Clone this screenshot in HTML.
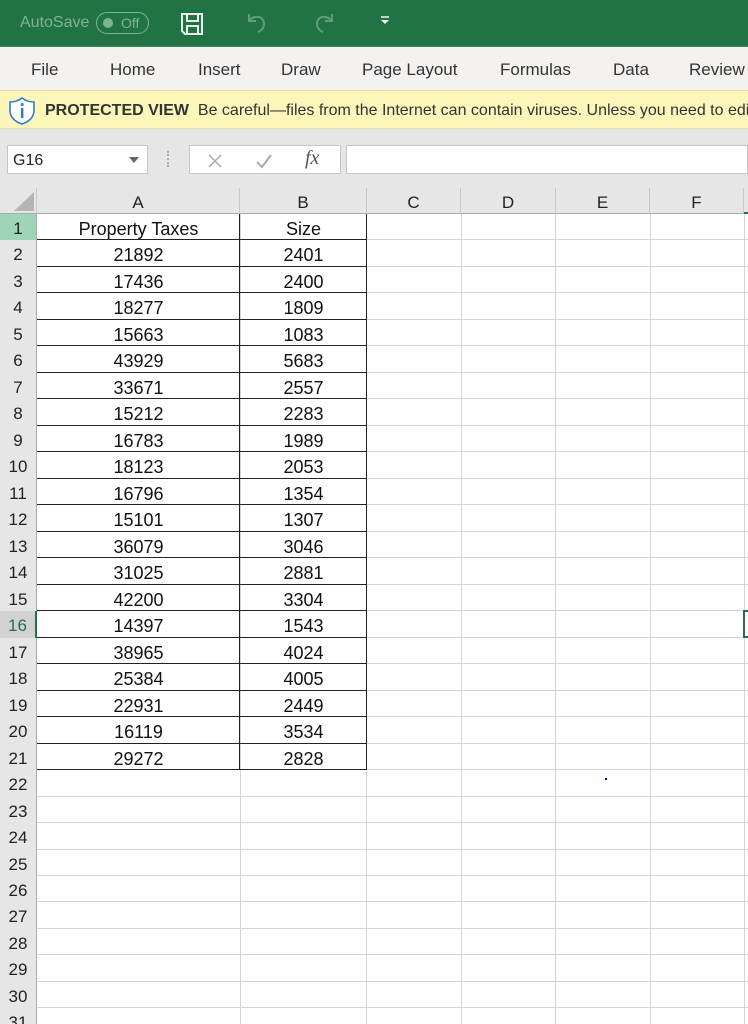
<!DOCTYPE html>
<html style="overflow:hidden"><head><meta charset="utf-8"><style>
*{margin:0;padding:0;box-sizing:border-box}
html,body{width:748px;height:1024px;overflow:hidden}
body{background:#fff;font-family:"Liberation Sans",sans-serif;position:relative}
.abs{position:absolute}
.top{left:0;top:0;width:748px;height:46px;background:#217346}
.tabs{left:0;top:46px;width:748px;height:44px;background:#f3f2f1;border-top:1px solid #3a8a5c;overflow:hidden}
.tab{position:absolute;top:13px;font-size:17px;color:#333}
.warn{left:0;top:90px;width:748px;height:39px;background:#fdf6bb;border-top:1px solid #e6dfa0;border-bottom:1px solid #e8e1a8;font-size:16px;color:#333;white-space:nowrap;overflow:hidden}
.gray{left:0;top:129px;width:748px;height:59px;background:#e6e6e6}
.box{background:#fff;border:1px solid #c6c6c6}
.hdr{top:188px;height:26px;background:#e6e6e6;border-right:1px solid #c8c8c8;border-bottom:1px solid #ababab;text-align:center;font-size:17px;line-height:30px;color:#222}
.rh{left:0;width:37px;background:#e6e6e6;border-right:1px solid #ababab;text-align:center;font-size:17px;color:#222;line-height:30px}
.hl{left:37px;width:711px;height:1px;background:#d4d4d4}
.vl{top:214px;width:1px;height:810px;background:#d4d4d4}
.c{font-size:18px;color:#111;text-align:center;line-height:30px}
</style></head><body>
<div class="abs top"></div>
<div class="abs" style="left:20px;top:14px;font-size:16px;color:#7fb394">AutoSave</div>
<div class="abs" style="left:96px;top:12px;width:53px;height:22px;border:1px solid #7fb394;border-radius:11px"></div>
<div class="abs" style="left:103px;top:18px;width:10px;height:10px;border-radius:5px;background:#7fb394"></div>
<div class="abs" style="left:121px;top:15px;font-size:14px;color:#7fb394">Off</div>
<svg class="abs" style="left:180px;top:12px" width="26" height="24" viewBox="0 0 26 24"><path d="M2 2h20v20H5l-3-3z M7 2v7h11V2 M7 22v-8h11v8" fill="none" stroke="#e8f0ea" stroke-width="2"/></svg>
<svg class="abs" style="left:245px;top:10px" width="26" height="26" viewBox="0 0 26 26"><path d="M4 4v7h7 M4 11c4-6 15-6 15 3 0 4-3 7-6 8" fill="none" stroke="#5e9e78" stroke-width="2"/></svg>
<svg class="abs" style="left:310px;top:10px" width="26" height="26" viewBox="0 0 26 26"><path d="M22 4v7h-7 M22 11c-4-6-15-6-15 3 0 4 3 7 6 8" fill="none" stroke="#5e9e78" stroke-width="2"/></svg>
<svg class="abs" style="left:380px;top:16px" width="10" height="10" viewBox="0 0 10 10"><path d="M1 1h8" stroke="#fff" stroke-width="1.4"/><path d="M1 4h8L5 8z" fill="#fff"/></svg>
<div class="abs tabs">
<span class="tab" style="left:31px">File</span><span class="tab" style="left:110px">Home</span><span class="tab" style="left:198px">Insert</span><span class="tab" style="left:281px">Draw</span><span class="tab" style="left:362px">Page Layout</span><span class="tab" style="left:500px">Formulas</span><span class="tab" style="left:613px">Data</span><span class="tab" style="left:689px">Review</span>
</div>
<div class="abs warn"><svg class="abs" style="left:8px;top:5px" width="28" height="30" viewBox="0 0 28 30"><path d="M14 2c4 3 8 4 12 4v8c0 8-6 12-12 14C8 26 2 22 2 14V6c4 0 8-1 12-4z" fill="#fff" stroke="#2b7cd3" stroke-width="1.6"/><rect x="13" y="12" width="2.4" height="10" fill="#2b7cd3"/><circle cx="14.2" cy="8.5" r="1.5" fill="#2b7cd3"/></svg><span class="abs" style="left:45px;top:11px"><b style="color:#333">PROTECTED VIEW</b>&nbsp; Be careful—files from the Internet can contain viruses. Unless you need to edit, it's safer to stay in Protected View.</span></div>
<div class="abs gray"></div>
<div class="abs box" style="left:7px;top:145px;width:141px;height:29px"><span class="abs" style="left:5px;top:6px;font-size:16px;color:#222">G16</span><svg class="abs" style="left:121px;top:11px" width="10" height="6"><path d="M0 0h10L5 6z" fill="#666"/></svg></div>
<div class="abs" style="left:167px;top:151px;width:2px;height:16px;border-left:2px dotted #aaa"></div>
<div class="abs box" style="left:189px;top:145px;width:152px;height:29px"><svg class="abs" style="left:17px;top:7px" width="16" height="16"><path d="M2 2l12 12M14 2L2 14" stroke="#aaa" stroke-width="1.5"/></svg><svg class="abs" style="left:65px;top:7px" width="18" height="16"><path d="M2 9l5 5L16 2" stroke="#aaa" stroke-width="2" fill="none"/></svg><span class="abs" style="left:115px;top:1px;font-family:'Liberation Serif',serif;font-style:italic;font-size:20px;color:#555">fx</span></div>
<div class="abs box" style="left:346px;top:145px;width:402px;height:29px"></div>
<div class="abs" style="left:0;top:188px;width:37px;height:26px;background:#e6e6e6;border-right:1px solid #c8c8c8;border-bottom:1px solid #ababab"><svg class="abs" style="left:14px;top:4px" width="20" height="19"><path d="M20 0v19H0z" fill="#b5b5b5"/></svg></div>
<div class="abs hdr" style="left:37px;width:203px">A</div>
<div class="abs hdr" style="left:240px;width:127px">B</div>
<div class="abs hdr" style="left:367px;width:94px">C</div>
<div class="abs hdr" style="left:461px;width:95px">D</div>
<div class="abs hdr" style="left:556px;width:94px">E</div>
<div class="abs hdr" style="left:650px;width:94px">F</div>
<div class="abs hdr" style="left:744px;width:4px;border-right:none;border-bottom:2px solid #217346"></div>
<div class="abs vl" style="left:240px"></div><div class="abs vl" style="left:366px"></div><div class="abs vl" style="left:461px"></div><div class="abs vl" style="left:555px"></div><div class="abs vl" style="left:650px"></div><div class="abs vl" style="left:744px"></div>
<div id="g"></div>
<div class="abs" style="left:605px;top:778px;width:2px;height:2px;background:#00f"></div>
<div class="abs" style="left:743px;top:610px;width:5px;height:28px;border:2px solid #217346;border-right:none"></div>
<script>
var A=["Property Taxes",21892,17436,18277,15663,43929,33671,15212,16783,18123,16796,15101,36079,31025,42200,14397,38965,25384,22931,16119,29272];
var B=["Size",2401,2400,1809,1083,5683,2557,2283,1989,2053,1354,1307,3046,2881,3304,1543,4024,4005,2449,3534,2828];
var h="",rh=26.48;
for(var n=1;n<=31;n++){var t=214+(n-1)*rh;var ht=Math.min(rh,1024-t);
var sel=n==16;
h+='<div class="abs rh" style="top:'+t+'px;height:'+ht+'px;overflow:hidden;'+(n==1?'background:#9fd5b7;':'')+(sel?'background:#d2d2d2;color:#217346;border-right:2px solid #217346;':'')+'">'+n+'</div>';
if(n<31)h+='<div class="abs hl" style="top:'+(t+rh-1)+'px"></div>';
if(n<=21){h+='<div class="abs c" style="left:37px;top:'+t+'px;width:203px;height:'+rh+'px">'+A[n-1]+'</div><div class="abs c" style="left:240px;top:'+t+'px;width:127px;height:'+rh+'px">'+B[n-1]+'</div>';
h+='<div class="abs" style="left:37px;top:'+(t+rh-1)+'px;width:330px;height:1px;background:#222"></div>';}
}
h+='<div class="abs" style="left:239px;top:214px;width:1px;height:556px;background:#222"></div><div class="abs" style="left:366px;top:214px;width:1px;height:556px;background:#222"></div>';
document.getElementById("g").innerHTML=h;
</script>
</body></html>
